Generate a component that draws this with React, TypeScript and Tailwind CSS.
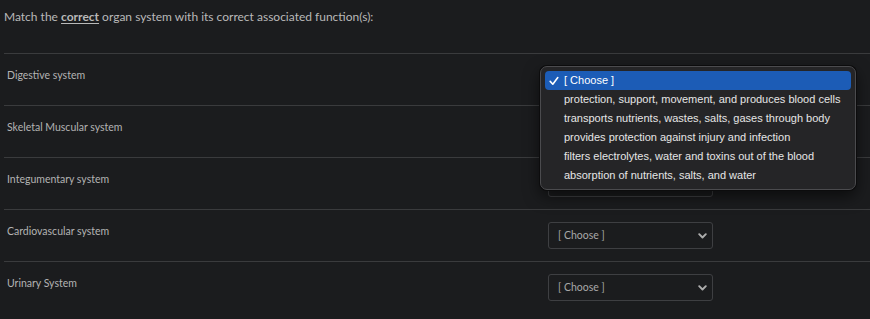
import React from 'react';

const rows = [
  'Digestive system',
  'Skeletal Muscular system',
  'Integumentary system',
  'Cardiovascular system',
  'Urinary System',
];

const options = [
  'protection, support, movement, and produces blood cells',
  'transports nutrients, wastes, salts, gases through body',
  'provides protection against injury and infection',
  'filters electrolytes, water and toxins out of the blood',
  'absorption of nutrients, salts, and water',
];

const Chevron = () => (
  <svg width="9" height="6" viewBox="0 0 9 6" fill="none">
    <path d="M1.2 1.2 L4.5 4.5 L7.8 1.2" stroke="#adadad" strokeWidth="1.9" strokeLinecap="round" strokeLinejoin="round" />
  </svg>
);

const Check = () => (
  <svg width="10" height="10" viewBox="0 0 10 10" fill="none">
    <path d="M1.2 5.4 L3.8 8.2 L8.8 1.6" stroke="#ffffff" strokeWidth="1.6" strokeLinecap="round" strokeLinejoin="round" />
  </svg>
);

const SelectBox = ({ open }: { open?: boolean }) => (
  <div className="relative">
    <div className="w-[165px] h-[27px] border border-[#3e3f42] rounded-[3px] flex items-center justify-between pl-[9px] pr-[5px] text-[10.5px] text-[#a8a8a8] font-['Lato',sans-serif]">
      <span>[ Choose ]</span>
      <Chevron />
    </div>
    {open && (
      <div className="absolute left-[-8px] top-[0px] w-[316px] z-10 bg-[#252527] border border-[#4b4b4e] rounded-[7px] p-[4px] shadow-[0_0_0_1px_#0c0c0d,0_6px_16px_rgba(0,0,0,0.6)] font-['Liberation_Sans',Arial,sans-serif] text-[11px] text-[#e6e6e6]">
        <div className="h-[19px] bg-[#1c5cb6] rounded-[4px] flex items-center pl-[4px] text-white font-medium">
          <span className="w-[15px] flex"><Check /></span>
          <span>[ Choose ]</span>
        </div>
        {options.map(o => (
          <div key={o} className="h-[19px] flex items-center pl-[19px] whitespace-nowrap">{o}</div>
        ))}
      </div>
    )}
  </div>
);

export default function App() {
  return (
    <div className="w-[870px] h-[319px] bg-[#1b1c1e] pl-[4px] overflow-hidden font-['Lato',sans-serif]">
      <div className="h-[53px] pt-[9px] text-[12px] leading-[15px] text-[#b9b9b9]">
        Match the <span className="font-bold underline underline-offset-2">correct</span> organ system with its correct associated function(s):
      </div>
      {rows.map((r, i) => (
        <div key={r} className="h-[52px] border-t border-[#3a3b3d] flex items-center">
          <div className="w-[544px] pl-[3px] pb-[7px] text-[10.5px] text-[#b3b3b3]">{r}</div>
          <SelectBox open={i === 0} />
        </div>
      ))}
    </div>
  );
}
